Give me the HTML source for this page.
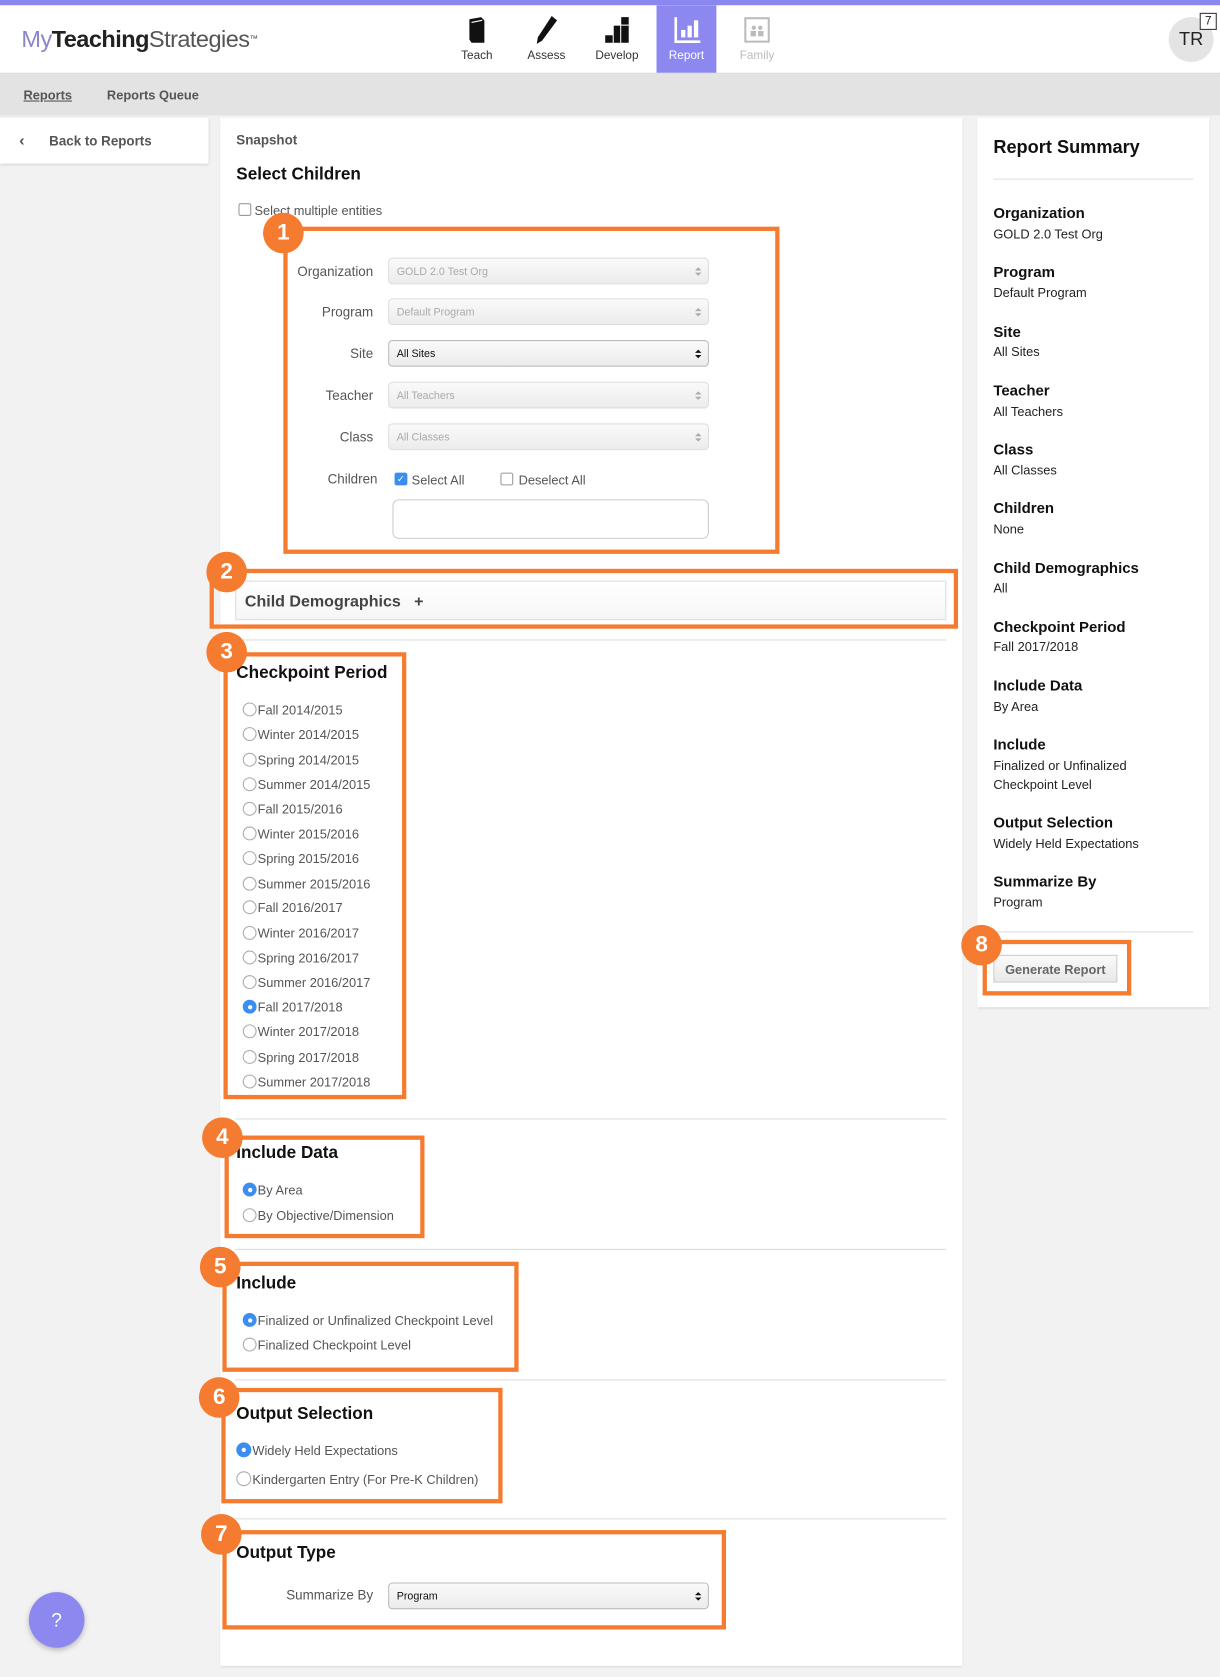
<!DOCTYPE html>
<html><head><meta charset="utf-8"><style>
html,body{margin:0;padding:0;background:#f2f2f2;width:1220px;height:1676px;overflow:hidden}
#w{position:absolute;left:0;top:0;width:1141px;height:1568px;transform:scale(1.06924);transform-origin:0 0;font-family:"Liberation Sans",sans-serif;color:#444}
.a{position:absolute}
.t{position:absolute;line-height:20px;margin-top:-9px;white-space:nowrap}
.ob{position:absolute;border:4px solid #f47b2f;box-sizing:border-box}
.bd{position:absolute;width:38px;height:38px;margin:-19px 0 0 -19px;border-radius:50%;background:#f47b2f;color:#fff;font-weight:bold;font-size:21px;text-align:center;line-height:38px}
.sel{position:absolute;left:363px;width:300px;height:25px;margin-top:-12px;box-sizing:border-box;border:1px solid #ddd;border-radius:4px;background:linear-gradient(#fafafa,#ececec);font-size:10px;line-height:25px;padding-left:7px;color:#aaa}
.sel:after{content:"";position:absolute;right:6px;top:8px;border:3px solid transparent;border-bottom:3px solid #aaa;border-top:0}
.sel:before{content:"";position:absolute;right:6px;top:13px;border:3px solid transparent;border-top:3px solid #aaa;border-bottom:0}
.sel.on{color:#111;border-color:#bbb}.sel.on:after{border-bottom-color:#111}.sel.on:before{border-top-color:#111}
.lb{position:absolute;right:792px;line-height:20px;margin-top:-9px;font-size:12.5px;color:#555;text-align:right}
.r{position:absolute;width:11px;height:11px;margin:-6px 0 0 -6px;border:1px solid #aaa;border-radius:50%;background:#fff}
.r.on{background:#3b8ef0;border-color:#3b8ef0}
.r.on:after{content:"";position:absolute;left:3.5px;top:3.5px;width:4px;height:4px;border-radius:50%;background:#fff}
.rt{position:absolute;font-size:12px;color:#555;line-height:20px;margin-top:-9px;white-space:nowrap}
.h{position:absolute;font-weight:bold;font-size:16px;color:#111;line-height:20px;margin-top:-9px;white-space:nowrap}
.hr{position:absolute;height:1px;background:#ddd}
.cb{position:absolute;width:10px;height:10px;margin-top:-6px;border:1px solid #999;border-radius:2px;background:#fff}
.st{position:absolute;left:929px;font-weight:bold;font-size:14px;color:#111;line-height:18px;margin-top:-8px}
.sv{position:absolute;left:929px;font-size:12px;color:#222;line-height:18px;margin-top:-8px}
.nl{position:absolute;top:46px;width:60px;margin-left:-30px;text-align:center;font-size:11px;color:#333}
</style></head><body><div id="w">
<div class="a" style="left:0;top:0;width:1141px;height:5px;background:#8b87f0"></div>
<div class="a" style="left:0;top:5px;width:1141px;height:63px;background:#fff;border-bottom:1px solid #d8d8d8"></div>
<div class="t" style="left:20px;top:36px;font-size:22px;letter-spacing:-0.5px"><span style="color:#8a86c8">My</span><span style="font-weight:bold;color:#222">Teaching</span><span style="color:#555">Strategies</span><span style="font-size:8px;vertical-align:top">™</span></div>
<div class="a" style="left:614px;top:5px;width:56px;height:63px;background:#8c88f0"></div>
<svg class="a" style="left:436px;top:15px" width="20" height="26" viewBox="0 0 20 26"><path d="M3 3 L14 1 L17 4 L17 25 L5 25 L3 22Z" fill="#111"/><path d="M5 6 L15 4" stroke="#fff" stroke-width="1"/></svg>
<svg class="a" style="left:500px;top:14px" width="22" height="28" viewBox="0 0 22 28"><path d="M16 1 L21 5 L7 24 L2 27 L3 21Z" fill="#111"/></svg>
<svg class="a" style="left:565px;top:15px" width="24" height="26" viewBox="0 0 24 26"><rect x="16" y="1" width="7" height="7" fill="#111"/><rect x="16" y="9" width="7" height="16" fill="#111"/><rect x="9" y="9" width="6" height="16" fill="#111"/><rect x="1" y="18" width="7" height="7" fill="#111"/></svg>
<svg class="a" style="left:630px;top:15px" width="26" height="26" viewBox="0 0 26 26"><path d="M2 1V24H25" stroke="#fff" stroke-width="2.5" fill="none"/><rect x="7" y="13" width="4" height="7" fill="#fff"/><rect x="13" y="9" width="4" height="11" fill="#fff"/><rect x="19" y="4" width="4" height="16" fill="#fff"/></svg>
<svg class="a" style="left:696px;top:16px" width="24" height="24" viewBox="0 0 24 24"><rect x="1" y="1" width="22" height="22" fill="none" stroke="#bbb" stroke-width="2"/><circle cx="9" cy="10" r="2" fill="#bbb"/><circle cx="15" cy="10" r="2" fill="#bbb"/><rect x="6" y="13" width="5" height="5" fill="#bbb"/><rect x="13" y="13" width="5" height="5" fill="#bbb"/></svg>
<div class="nl" style="left:446px">Teach</div><div class="nl" style="left:511px">Assess</div><div class="nl" style="left:577px">Develop</div><div class="nl" style="left:642px;color:#fff">Report</div><div class="nl" style="left:708px;color:#bbb">Family</div>
<div class="a" style="left:1093px;top:16px;width:42px;height:42px;border-radius:50%;background:#e4e4e4;text-align:center;line-height:42px;font-size:17px;color:#222">TR</div>
<div class="a" style="left:1122px;top:12px;width:14px;height:14px;border:1px solid #333;background:#fff;font-size:11px;text-align:center;line-height:14px;color:#222">7</div>
<div class="a" style="left:0;top:69px;width:1141px;height:39px;background:#e3e3e3"></div>
<div class="t" style="left:22px;top:88px;font-size:12px;font-weight:bold;color:#555;text-decoration:underline">Reports</div>
<div class="t" style="left:100px;top:88px;font-size:12px;font-weight:bold;color:#555">Reports Queue</div>
<div class="a" style="left:0;top:110px;width:195px;height:43px;background:#fff;box-shadow:0 1px 3px rgba(0,0,0,.15)"></div>
<div class="t" style="left:18px;top:131px;font-size:15px;font-weight:bold;color:#555">‹</div>
<div class="t" style="left:46px;top:131px;font-size:12.5px;font-weight:bold;color:#555">Back to Reports</div>
<div class="a" style="left:206px;top:110px;width:694px;height:1448px;background:#fff;box-shadow:0 1px 2px rgba(0,0,0,.1)"></div>
<div class="a" style="left:914px;top:110px;width:217px;height:832px;background:#fff;box-shadow:0 1px 2px rgba(0,0,0,.1)"></div>
<div class="t" style="left:221px;top:130px;font-size:12.5px;font-weight:bold;color:#555">Snapshot</div>
<div class="h" style="left:221px;top:163px">Select Children</div>
<div class="cb" style="left:223px;top:196px"></div><div class="rt" style="left:238px;top:196px">Select multiple entities</div>
<div class="ob" style="left:265px;top:212px;width:464px;height:306px"></div>
<div class="lb" style="top:253px">Organization</div><div class="sel" style="top:253px">GOLD 2.0 Test Org</div>
<div class="lb" style="top:291px">Program</div><div class="sel" style="top:291px">Default Program</div>
<div class="lb" style="top:330px">Site</div><div class="sel on" style="top:330px">All Sites</div>
<div class="lb" style="top:369px">Teacher</div><div class="sel" style="top:369px">All Teachers</div>
<div class="lb" style="top:408px">Class</div><div class="sel" style="top:408px">All Classes</div>
<div class="lb" style="top:447px;right:788px">Children</div>
<div class="cb" style="left:369px;top:448px;background:#3b8ef0;border-color:#3b8ef0;color:#fff;font-size:9px;line-height:10px;text-align:center">✓</div><div class="rt" style="left:385px;top:448px">Select All</div>
<div class="cb" style="left:468px;top:448px"></div><div class="rt" style="left:485px;top:448px">Deselect All</div>
<div class="a" style="left:367px;top:467px;width:296px;height:37px;box-sizing:border-box;border:1px solid #ccc;border-radius:6px"></div>
<div class="bd" style="left:265px;top:218px">1</div>
<div class="ob" style="left:196px;top:532px;width:700px;height:56px"></div>
<div class="a" style="left:220px;top:543px;width:665px;height:37px;box-sizing:border-box;border:1px solid #ddd;background:linear-gradient(#fff,#f6f6f6)"></div>
<div class="t" style="left:229px;top:562px;font-size:15px;font-weight:bold;color:#444">Child Demographics &nbsp; +</div>
<div class="bd" style="left:212px;top:535px">2</div>
<div class="hr" style="left:220px;top:598px;width:665px"></div>
<div class="ob" style="left:209px;top:610px;width:171px;height:418px"></div>
<div class="h" style="left:221px;top:629px">Checkpoint Period</div>
<div class="bd" style="left:212px;top:610px">3</div>
<div class="hr" style="left:220px;top:1046px;width:665px"></div>
<div class="ob" style="left:210px;top:1062px;width:187px;height:96px"></div>
<div class="h" style="left:221px;top:1078px">Include Data</div>
<div class="r on" style="left:233px;top:1112px"></div><div class="rt" style="left:241px;top:1112px">By Area</div>
<div class="r" style="left:233px;top:1136px"></div><div class="rt" style="left:241px;top:1136px">By Objective/Dimension</div>
<div class="bd" style="left:208px;top:1064px">4</div>
<div class="hr" style="left:220px;top:1168px;width:665px"></div>
<div class="ob" style="left:208px;top:1180px;width:277px;height:103px"></div>
<div class="h" style="left:221px;top:1200px">Include</div>
<div class="r on" style="left:233px;top:1234px"></div><div class="rt" style="left:241px;top:1234px">Finalized or Unfinalized Checkpoint Level</div>
<div class="r" style="left:233px;top:1257px"></div><div class="rt" style="left:241px;top:1257px">Finalized Checkpoint Level</div>
<div class="bd" style="left:206px;top:1185px">5</div>
<div class="hr" style="left:220px;top:1290px;width:665px"></div>
<div class="ob" style="left:207px;top:1298px;width:263px;height:108px"></div>
<div class="h" style="left:221px;top:1322px">Output Selection</div>
<div class="r on" style="left:228px;top:1356px;width:12px;height:12px;margin:-7px 0 0 -7px"></div><div class="rt" style="left:236px;top:1356px">Widely Held Expectations</div>
<div class="r" style="left:228px;top:1383px;width:12px;height:12px;margin:-7px 0 0 -7px"></div><div class="rt" style="left:236px;top:1383px">Kindergarten Entry (For Pre-K Children)</div>
<div class="bd" style="left:205px;top:1307px">6</div>
<div class="hr" style="left:220px;top:1420px;width:665px"></div>
<div class="ob" style="left:208px;top:1431px;width:471px;height:93px"></div>
<div class="h" style="left:221px;top:1452px">Output Type</div>
<div class="lb" style="top:1491px">Summarize By</div><div class="sel on" style="top:1492px">Program</div>
<div class="bd" style="left:207px;top:1435px">7</div>
<div class="a" style="left:27px;top:1489px;width:52px;height:52px;border-radius:50%;background:#8c88f0;color:#fff;text-align:center;line-height:52px;font-size:18px;box-shadow:0 2px 5px rgba(0,0,0,.25)">?</div>
<div class="t" style="left:929px;top:137px;font-size:17px;font-weight:bold;color:#111">Report Summary</div>
<div class="hr" style="left:929px;top:167px;width:187px"></div>
<div class="st" style="top:198px">Organization</div><div class="sv" style="top:218px">GOLD 2.0 Test Org</div>
<div class="st" style="top:253px">Program</div><div class="sv" style="top:273px">Default Program</div>
<div class="st" style="top:309px">Site</div><div class="sv" style="top:328px">All Sites</div>
<div class="st" style="top:364px">Teacher</div><div class="sv" style="top:384px">All Teachers</div>
<div class="st" style="top:419px">Class</div><div class="sv" style="top:439px">All Classes</div>
<div class="st" style="top:474px">Children</div><div class="sv" style="top:494px">None</div>
<div class="st" style="top:530px">Child Demographics</div><div class="sv" style="top:549px">All</div>
<div class="st" style="top:585px">Checkpoint Period</div><div class="sv" style="top:604px">Fall 2017/2018</div>
<div class="st" style="top:640px">Include Data</div><div class="sv" style="top:660px">By Area</div>
<div class="st" style="top:695px">Include</div><div class="sv" style="top:715px">Finalized or Unfinalized</div><div class="sv" style="top:733px">Checkpoint Level</div>
<div class="st" style="top:768px">Output Selection</div><div class="sv" style="top:788px">Widely Held Expectations</div>
<div class="st" style="top:823px">Summarize By</div><div class="sv" style="top:843px">Program</div>
<div class="hr" style="left:929px;top:871px;width:187px"></div>
<div class="a" style="left:929px;top:893px;width:116px;height:26px;box-sizing:border-box;border:1px solid #ccc;background:linear-gradient(#fafafa,#e8e8e8);font-size:12px;font-weight:bold;color:#666;text-align:center;line-height:26px">Generate Report</div>
<div class="ob" style="left:919px;top:879px;width:139px;height:52px"></div>
<div class="bd" style="left:918px;top:884px">8</div>
<div class="a" style="left:0;top:0">
<div class="r" style="left:233px;top:663px"></div><div class="rt" style="left:241px;top:663px">Fall 2014/2015</div>
<div class="r" style="left:233px;top:686px"></div><div class="rt" style="left:241px;top:686px">Winter 2014/2015</div>
<div class="r" style="left:233px;top:710px"></div><div class="rt" style="left:241px;top:710px">Spring 2014/2015</div>
<div class="r" style="left:233px;top:733px"></div><div class="rt" style="left:241px;top:733px">Summer 2014/2015</div>
<div class="r" style="left:233px;top:756px"></div><div class="rt" style="left:241px;top:756px">Fall 2015/2016</div>
<div class="r" style="left:233px;top:779px"></div><div class="rt" style="left:241px;top:779px">Winter 2015/2016</div>
<div class="r" style="left:233px;top:802px"></div><div class="rt" style="left:241px;top:802px">Spring 2015/2016</div>
<div class="r" style="left:233px;top:826px"></div><div class="rt" style="left:241px;top:826px">Summer 2015/2016</div>
<div class="r" style="left:233px;top:848px"></div><div class="rt" style="left:241px;top:848px">Fall 2016/2017</div>
<div class="r" style="left:233px;top:872px"></div><div class="rt" style="left:241px;top:872px">Winter 2016/2017</div>
<div class="r" style="left:233px;top:895px"></div><div class="rt" style="left:241px;top:895px">Spring 2016/2017</div>
<div class="r" style="left:233px;top:918px"></div><div class="rt" style="left:241px;top:918px">Summer 2016/2017</div>
<div class="r on" style="left:233px;top:941px"></div><div class="rt" style="left:241px;top:941px">Fall 2017/2018</div>
<div class="r" style="left:233px;top:964px"></div><div class="rt" style="left:241px;top:964px">Winter 2017/2018</div>
<div class="r" style="left:233px;top:988px"></div><div class="rt" style="left:241px;top:988px">Spring 2017/2018</div>
<div class="r" style="left:233px;top:1011px"></div><div class="rt" style="left:241px;top:1011px">Summer 2017/2018</div>
</div>
</div></body></html>
